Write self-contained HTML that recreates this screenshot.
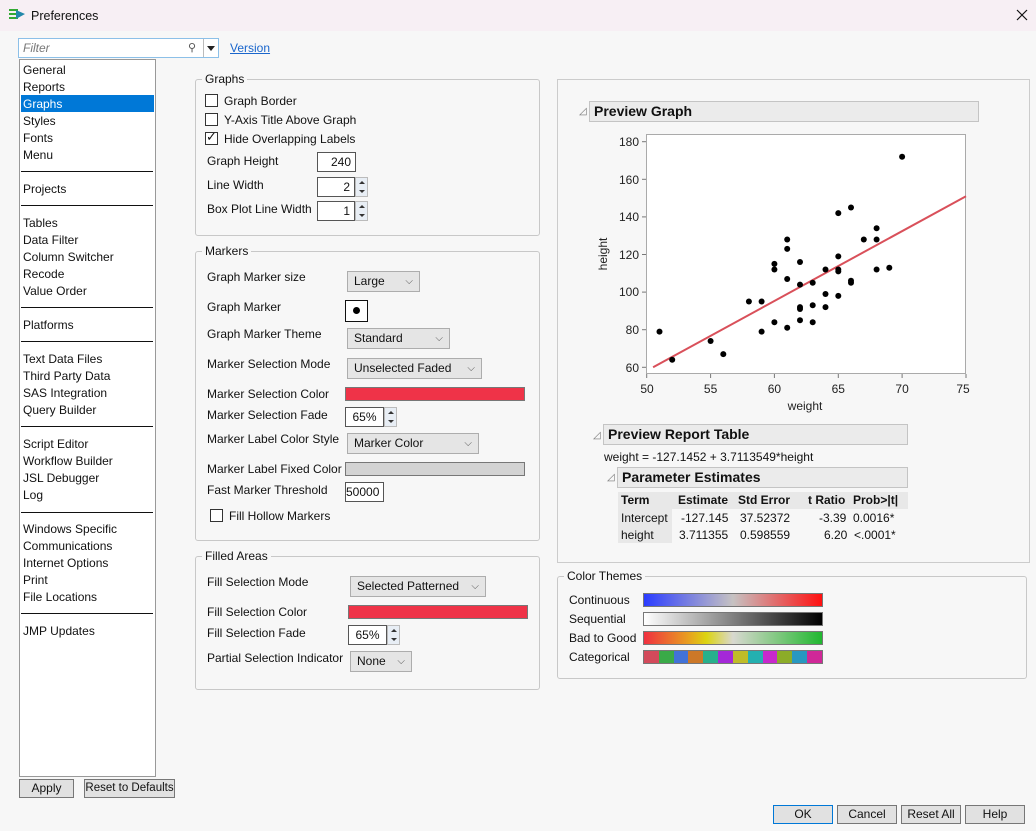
<!DOCTYPE html>
<html><head><meta charset="utf-8"><style>
*{box-sizing:border-box;margin:0;padding:0}
body{width:1036px;height:831px;background:#f7f7f7;font-family:"Liberation Sans",sans-serif;font-size:12px;color:#111;position:relative;overflow:hidden}
.a{position:absolute}
.t{position:absolute;line-height:16px;white-space:nowrap}
.gb{position:absolute;border:1px solid #c8c8c8;border-radius:3px}
.gl{position:absolute;background:#f7f7f7;padding:0 3px;line-height:14px;top:-8px;left:6px}
.cb{position:absolute;width:13px;height:13px;border:1px solid #333;background:#fff}
.in{position:absolute;height:20px;border:1px solid #555;background:#fff;text-align:right;padding-right:4px;line-height:18px}
.sp{position:absolute;width:13px;height:20px;border:1px solid #bbb;background:#e8eef5}
.sp:before{content:"";position:absolute;left:3px;top:3px;border:3px solid transparent;border-bottom:3px solid #333;border-top:0}
.sp:after{content:"";position:absolute;left:3px;bottom:3px;border:3px solid transparent;border-top:3px solid #333;border-bottom:0}
.dd{position:absolute;height:21px;border:1px solid #adadad;background:#e5e5e5;padding-left:6px;line-height:19px}
.dd:after{content:"\2335";position:absolute;right:6px;top:0;font-size:10px;color:#555}
.sep{position:absolute;left:22px;width:132px;height:1px;background:#111}
.btn{position:absolute;height:19px;border:1px solid #777;background:#e1e1e1;text-align:center;line-height:17px;white-space:nowrap;overflow:hidden}
.hdr{position:absolute;height:21px;background:#ebebeb;border:1px solid #c4c4c4;font-weight:bold;font-size:14px;line-height:19px;padding-left:4px}
.tri{position:absolute;font-size:10px;color:#777}
</style></head><body>
<div class="a" style="left:0;top:0;width:1036px;height:31px;background:#f7eff4"></div>
<svg class="a" style="left:9px;top:7px" width="17" height="15"><rect x="0" y="2" width="9" height="2" fill="#3a3"/><rect x="0" y="6" width="9" height="2" fill="#3a3"/><rect x="0" y="10" width="9" height="2" fill="#3a3"/><path d="M7 3 L16 7 L7 12 Z" fill="#28a"/></svg>
<div class="t" style="left:31px;top:8px;font-size:12.5px">Preferences</div>
<svg class="a" style="left:1016px;top:9px" width="12" height="12"><path d="M1 1 L11 11 M11 1 L1 11" stroke="#111" stroke-width="1.2"/></svg>

<div class="a" style="left:18px;top:38px;width:201px;height:20px;border:1px solid #8cc0e8;background:#fff"></div>
<div class="t" style="left:23px;top:40px;font-style:italic;color:#777">Filter</div>
<div class="t" style="left:188px;top:40px;color:#555;font-size:11px">⚲</div>
<div class="a" style="left:203px;top:39px;width:1px;height:18px;background:#bbb"></div>
<div class="a" style="left:207px;top:46px;border:4px solid transparent;border-top:5px solid #222"></div>
<div class="t" style="left:230px;top:40px;color:#1a66cc;text-decoration:underline">Version</div>

<div class="a" style="left:19px;top:59px;width:137px;height:718px;border:1px solid #999;background:#fff"></div>
<div class="a" style="left:21px;top:95px;width:133px;height:17px;background:#0078d7"></div>
<div class="t" style="left:23px;top:62px">General</div>
<div class="t" style="left:23px;top:79px">Reports</div>
<div class="t" style="left:23px;top:96px;color:#fff">Graphs</div>
<div class="t" style="left:23px;top:113px">Styles</div>
<div class="t" style="left:23px;top:130px">Fonts</div>
<div class="t" style="left:23px;top:147px">Menu</div>
<div class="sep" style="left:21px;top:171px"></div>
<div class="t" style="left:23px;top:181px">Projects</div>
<div class="sep" style="left:21px;top:205px"></div>
<div class="t" style="left:23px;top:215px">Tables</div>
<div class="t" style="left:23px;top:232px">Data Filter</div>
<div class="t" style="left:23px;top:249px">Column Switcher</div>
<div class="t" style="left:23px;top:266px">Recode</div>
<div class="t" style="left:23px;top:283px">Value Order</div>
<div class="sep" style="left:21px;top:307px"></div>
<div class="t" style="left:23px;top:317px">Platforms</div>
<div class="sep" style="left:21px;top:341px"></div>
<div class="t" style="left:23px;top:351px">Text Data Files</div>
<div class="t" style="left:23px;top:368px">Third Party Data</div>
<div class="t" style="left:23px;top:385px">SAS Integration</div>
<div class="t" style="left:23px;top:402px">Query Builder</div>
<div class="sep" style="left:21px;top:426px"></div>
<div class="t" style="left:23px;top:436px">Script Editor</div>
<div class="t" style="left:23px;top:453px">Workflow Builder</div>
<div class="t" style="left:23px;top:470px">JSL Debugger</div>
<div class="t" style="left:23px;top:487px">Log</div>
<div class="sep" style="left:21px;top:512px"></div>
<div class="t" style="left:23px;top:521px">Windows Specific</div>
<div class="t" style="left:23px;top:538px">Communications</div>
<div class="t" style="left:23px;top:555px">Internet Options</div>
<div class="t" style="left:23px;top:572px">Print</div>
<div class="t" style="left:23px;top:589px">File Locations</div>
<div class="sep" style="left:21px;top:613px"></div>
<div class="t" style="left:23px;top:623px">JMP Updates</div>
<div class="btn" style="left:19px;top:779px;width:55px">Apply</div>
<div class="btn" style="left:84px;top:779px;width:91px;font-size:11.5px">Reset to Defaults</div>

<!-- Graphs -->
<div class="gb" style="left:195px;top:79px;width:345px;height:157px"><div class="gl">Graphs</div></div>
<div class="cb" style="left:205px;top:94px"></div><div class="t" style="left:224px;top:93px">Graph Border</div>
<div class="cb" style="left:205px;top:113px"></div><div class="t" style="left:224px;top:112px">Y-Axis Title Above Graph</div>
<div class="cb" style="left:205px;top:132px"></div><div class="t" style="left:206px;top:129px;font-size:13px">✓</div><div class="t" style="left:224px;top:131px">Hide Overlapping Labels</div>
<div class="t" style="left:207px;top:153px">Graph Height</div><div class="in" style="left:317px;top:152px;width:39px">240</div>
<div class="t" style="left:207px;top:177px">Line Width</div><div class="in" style="left:317px;top:177px;width:38px">2</div><div class="sp" style="left:355px;top:177px"></div>
<div class="t" style="left:207px;top:201px">Box Plot Line Width</div><div class="in" style="left:317px;top:201px;width:38px">1</div><div class="sp" style="left:355px;top:201px"></div>

<!-- Markers -->
<div class="gb" style="left:195px;top:251px;width:345px;height:290px"><div class="gl">Markers</div></div>
<div class="t" style="left:207px;top:269px">Graph Marker size</div><div class="dd" style="left:347px;top:271px;width:73px">Large</div>
<div class="t" style="left:207px;top:299px">Graph Marker</div><div class="a" style="left:345px;top:300px;width:23px;height:22px;border:1px solid #111;background:#fff"></div><div class="a" style="left:353px;top:307px;width:7px;height:7px;border-radius:50%;background:#000"></div>
<div class="t" style="left:207px;top:326px">Graph Marker Theme</div><div class="dd" style="left:347px;top:328px;width:103px">Standard</div>
<div class="t" style="left:207px;top:356px">Marker Selection Mode</div><div class="dd" style="left:347px;top:358px;width:135px">Unselected Faded</div>
<div class="t" style="left:207px;top:386px">Marker Selection Color</div><div class="a" style="left:345px;top:387px;width:180px;height:14px;background:#ef3348;border:1px solid #777"></div>
<div class="t" style="left:207px;top:407px">Marker Selection Fade</div><div class="in" style="left:345px;top:407px;width:39px;text-align:center;padding:0">65%</div><div class="sp" style="left:384px;top:407px"></div>
<div class="t" style="left:207px;top:431px">Marker Label Color Style</div><div class="dd" style="left:347px;top:433px;width:132px">Marker Color</div>
<div class="t" style="left:207px;top:461px">Marker Label Fixed Color</div><div class="a" style="left:345px;top:462px;width:180px;height:14px;background:#d3d3d3;border:1px solid #777"></div>
<div class="t" style="left:207px;top:482px">Fast Marker Threshold</div><div class="in" style="left:345px;top:482px;width:39px;text-align:left;padding:0">50000</div>
<div class="cb" style="left:210px;top:509px"></div><div class="t" style="left:229px;top:508px">Fill Hollow Markers</div>

<!-- Filled -->
<div class="gb" style="left:195px;top:556px;width:345px;height:134px"><div class="gl">Filled Areas</div></div>
<div class="t" style="left:207px;top:574px">Fill Selection Mode</div><div class="dd" style="left:350px;top:576px;width:136px">Selected Patterned</div>
<div class="t" style="left:207px;top:604px">Fill Selection Color</div><div class="a" style="left:348px;top:605px;width:180px;height:14px;background:#ef3348;border:1px solid #777"></div>
<div class="t" style="left:207px;top:625px">Fill Selection Fade</div><div class="in" style="left:348px;top:625px;width:39px;text-align:center;padding:0">65%</div><div class="sp" style="left:387px;top:625px"></div>
<div class="t" style="left:207px;top:650px">Partial Selection Indicator</div><div class="dd" style="left:350px;top:651px;width:62px">None</div>

<!-- Preview -->
<div class="a" style="left:557px;top:79px;width:473px;height:484px;border:1px solid #ccc"></div>
<div class="tri" style="left:579px;top:106px">◿</div>
<div class="hdr" style="left:589px;top:101px;width:390px">Preview Graph</div>
<svg class="a" style="left:580px;top:130px" width="400" height="285" font-family="Liberation Sans" font-size="12" fill="#222">
<g transform="translate(-580,-130)">
<rect x="646.5" y="134.5" width="319" height="239" fill="#fff" stroke="#aaa"/>
<g stroke="#777"><line x1="642" y1="141.7" x2="646" y2="141.7"/><line x1="642" y1="179.3" x2="646" y2="179.3"/><line x1="642" y1="216.9" x2="646" y2="216.9"/><line x1="642" y1="254.5" x2="646" y2="254.5"/><line x1="642" y1="292.1" x2="646" y2="292.1"/><line x1="642" y1="329.7" x2="646" y2="329.7"/><line x1="642" y1="367.3" x2="646" y2="367.3"/>
<line x1="646.7" y1="374" x2="646.7" y2="378"/><line x1="710.6" y1="374" x2="710.6" y2="378"/><line x1="774.4" y1="374" x2="774.4" y2="378"/><line x1="838.3" y1="374" x2="838.3" y2="378"/><line x1="902.1" y1="374" x2="902.1" y2="378"/><line x1="966" y1="374" x2="966" y2="378"/></g>
<g text-anchor="end"><text x="639" y="146">180</text><text x="639" y="184">160</text><text x="639" y="221">140</text><text x="639" y="259">120</text><text x="639" y="296">100</text><text x="639" y="334">80</text><text x="639" y="372">60</text></g>
<g text-anchor="middle"><text x="647" y="393">50</text><text x="710.6" y="393">55</text><text x="774.4" y="393">60</text><text x="838.3" y="393">65</text><text x="902.1" y="393">70</text><text x="963" y="393">75</text><text x="805" y="410">weight</text>
<text transform="translate(607,254) rotate(-90)">height</text></g>
<line x1="653.1" y1="367.3" x2="966" y2="196.2" stroke="#d9505a" stroke-width="2"/>
<g fill="#000">
<circle cx="659.5" cy="331.6" r="3"/><circle cx="672.2" cy="359.8" r="3"/><circle cx="710.6" cy="341" r="3"/><circle cx="723.3" cy="354.1" r="3"/><circle cx="748.9" cy="301.5" r="3"/><circle cx="761.6" cy="301.5" r="3"/><circle cx="761.6" cy="331.6" r="3"/><circle cx="774.4" cy="263.9" r="3"/><circle cx="774.4" cy="269.5" r="3"/><circle cx="774.4" cy="322.2" r="3"/><circle cx="787.2" cy="239.5" r="3"/><circle cx="787.2" cy="248.9" r="3"/><circle cx="787.2" cy="279" r="3"/><circle cx="787.2" cy="327.8" r="3"/><circle cx="800" cy="262" r="3"/><circle cx="800" cy="284.6" r="3"/><circle cx="800" cy="307.1" r="3"/><circle cx="800" cy="309" r="3"/><circle cx="800" cy="320.3" r="3"/><circle cx="812.7" cy="282.7" r="3"/><circle cx="812.7" cy="305.3" r="3"/><circle cx="812.7" cy="322.2" r="3"/><circle cx="825.5" cy="269.5" r="3"/><circle cx="825.5" cy="294" r="3"/><circle cx="825.5" cy="307.1" r="3"/><circle cx="838.3" cy="213.1" r="3"/><circle cx="838.3" cy="256.4" r="3"/><circle cx="838.3" cy="269.5" r="3"/><circle cx="838.3" cy="271.4" r="3"/><circle cx="838.3" cy="295.9" r="3"/><circle cx="851" cy="207.5" r="3"/><circle cx="851" cy="280.8" r="3"/><circle cx="851" cy="282.7" r="3"/><circle cx="863.8" cy="239.5" r="3"/><circle cx="876.6" cy="228.2" r="3"/><circle cx="876.6" cy="239.5" r="3"/><circle cx="876.6" cy="269.5" r="3"/><circle cx="889.3" cy="267.7" r="3"/><circle cx="902.1" cy="156.7" r="3"/>
</g></g></svg>

<div class="tri" style="left:593px;top:430px">◿</div>
<div class="hdr" style="left:603px;top:424px;width:305px">Preview Report Table</div>
<div class="t" style="left:604px;top:449px">weight = -127.1452 + 3.7113549*height</div>
<div class="tri" style="left:607px;top:472px">◿</div>
<div class="hdr" style="left:617px;top:467px;width:291px">Parameter Estimates</div>
<div class="a" style="left:618px;top:492px;width:290px;height:17px;background:#e8e8e8"></div>
<div class="a" style="left:618px;top:509px;width:54px;height:34px;background:#e8e8e8"></div>
<div class="t" style="left:621px;top:492px;font-weight:bold">Term</div>
<div class="t" style="left:678px;top:492px;font-weight:bold">Estimate</div>
<div class="t" style="left:738px;top:492px;font-weight:bold">Std Error</div>
<div class="t" style="left:808px;top:492px;font-weight:bold">t Ratio</div>
<div class="t" style="left:853px;top:492px;font-weight:bold">Prob&gt;|t|</div>
<div class="t" style="left:621px;top:510px">Intercept</div><div class="t" style="left:681px;top:510px">-127.145</div><div class="t" style="left:740px;top:510px">37.52372</div><div class="t" style="left:819px;top:510px">-3.39</div><div class="t" style="left:853px;top:510px">0.0016*</div>
<div class="t" style="left:621px;top:527px">height</div><div class="t" style="left:679px;top:527px">3.711355</div><div class="t" style="left:740px;top:527px">0.598559</div><div class="t" style="left:824px;top:527px">6.20</div><div class="t" style="left:854px;top:527px">&lt;.0001*</div>

<!-- Color themes -->
<div class="gb" style="left:557px;top:576px;width:470px;height:103px"><div class="gl">Color Themes</div></div>
<div class="t" style="left:569px;top:592px">Continuous</div><div class="a" style="left:643px;top:593px;width:180px;height:14px;border:1px solid #777;background:linear-gradient(90deg,#2a3cff,#c6c2c2,#ff1010)"></div>
<div class="t" style="left:569px;top:611px">Sequential</div><div class="a" style="left:643px;top:612px;width:180px;height:14px;border:1px solid #777;background:linear-gradient(90deg,#fff,#000)"></div>
<div class="t" style="left:569px;top:630px">Bad to Good</div><div class="a" style="left:643px;top:631px;width:180px;height:14px;border:1px solid #777;background:linear-gradient(90deg,#f03040,#e8a020 25%,#dcd410 35%,#d8d8d0 50%,#80c880 75%,#20b830)"></div>
<div class="t" style="left:569px;top:649px">Categorical</div>
<div class="a" style="left:643px;top:650px;width:180px;height:14px;border:1px solid #777;display:flex">
<div style="flex:1;background:#d34a5b"></div><div style="flex:1;background:#3aaa48"></div><div style="flex:1;background:#4272d8"></div><div style="flex:1;background:#cc7828"></div><div style="flex:1;background:#28b08c"></div><div style="flex:1;background:#a428d8"></div><div style="flex:1;background:#c0bc28"></div><div style="flex:1;background:#24b0b0"></div><div style="flex:1;background:#c828cc"></div><div style="flex:1;background:#8cac28"></div><div style="flex:1;background:#2898c0"></div><div style="flex:1;background:#d02898"></div></div>

<div class="btn" style="left:773px;top:805px;width:60px;border-color:#0078d7">OK</div>
<div class="btn" style="left:837px;top:805px;width:60px">Cancel</div>
<div class="btn" style="left:901px;top:805px;width:60px">Reset All</div>
<div class="btn" style="left:965px;top:805px;width:60px">Help</div>
</body></html>
